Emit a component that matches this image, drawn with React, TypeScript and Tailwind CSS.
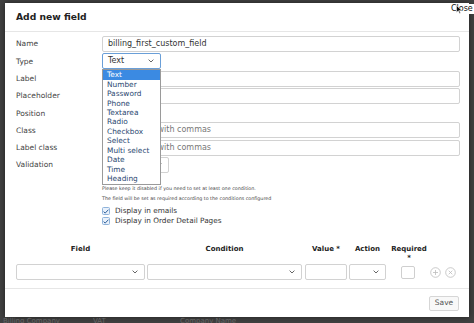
import React from 'react';

const types = [
  'Text',
  'Number',
  'Password',
  'Phone',
  'Textarea',
  'Radio',
  'Checkbox',
  'Select',
  'Multi select',
  'Date',
  'Time',
  'Heading'
];

function Chevron() {
  return (
    <svg width="6" height="4" viewBox="0 0 6 4" className="shrink-0">
      <polyline points="0.6,0.6 3,3 5.4,0.6" fill="none" stroke="#555" strokeWidth="0.9" />
    </svg>
  );
}

function Field({ children, className = '' }: { children?: React.ReactNode; className?: string }) {
  return (
    <div
      className={`h-[16px] border border-[#d2d2d2] rounded-[2px] px-[5px] flex items-center text-[8px] text-[#333] bg-white ${className}`}
    >
      {children}
    </div>
  );
}

function SelectBox({ className = '', text = '', focused = false }: { className?: string; text?: string; focused?: boolean }) {
  return (
    <div
      className={`h-[16px] border rounded-[2px] pl-[5px] pr-[6px] flex items-center justify-between text-[8px] text-[#333] bg-white ${
        focused ? 'border-[#6a9fd8]' : 'border-[#d2d2d2]'
      } ${className}`}
    >
      <span>{text}</span>
      <Chevron />
    </div>
  );
}

function Row({ label, children }: { label: string; children?: React.ReactNode }) {
  return (
    <div className="flex items-center mb-[1.3px]">
      <div className="w-[86px] shrink-0 text-[7.5px] text-[#444]">{label}</div>
      <div className="flex-1 h-[16px] relative">{children}</div>
    </div>
  );
}

function Check({ label }: { label: string }) {
  return (
    <div className="flex items-center h-[10px] gap-[5px]">
      <div className="w-[8px] h-[8px] rounded-[1.5px] border border-[#8fb3da] bg-[#e9f1fb] flex items-center justify-center">
        <svg width="6" height="5" viewBox="0 0 6 5">
          <polyline points="0.6,2.6 2.2,4.1 5.4,0.7" fill="none" stroke="#2d5f9a" strokeWidth="1" />
        </svg>
      </div>
      <span className="text-[7.3px] text-[#333]">{label}</span>
    </div>
  );
}

function CircleIcon({ kind }: { kind: 'plus' | 'x' }) {
  return (
    <svg width="11" height="11" viewBox="0 0 11 11">
      <circle cx="5.5" cy="5.5" r="4.8" fill="none" stroke="#bdbdbd" strokeWidth="0.8" />
      {kind === 'plus' ? (
        <path d="M5.5 3v5M3 5.5h5" stroke="#bdbdbd" strokeWidth="0.8" />
      ) : (
        <path d="M3.7 3.7l3.6 3.6M7.3 3.7l-3.6 3.6" stroke="#bdbdbd" strokeWidth="0.8" />
      )}
    </svg>
  );
}

export default function App() {
  return (
    <div className="w-[474px] h-[323px] bg-[#414141] relative overflow-hidden pt-[3px] pl-[5px] font-['DejaVu_Sans',sans-serif]">
      <div className="w-[464px] h-[314px] bg-white flex flex-col shadow-[0_0_6px_rgba(0,0,0,0.5)]">
        {/* Header */}
        <div className="h-[29px] shrink-0 border-b border-[#e6e6e6] px-[11px] flex items-center">
          <h1 className="text-[9.2px] font-bold text-[#222]">Add new field</h1>
        </div>

        {/* Body */}
        <div className="flex-1 pl-[11px] pr-[9px] pt-[4px]">
          <Row label="Name">
            <Field>billing_first_custom_field</Field>
          </Row>
          <Row label="Type">
            <SelectBox className="w-[59px]" text="Text" focused />
            <div className="absolute left-0 top-[16px] w-[59px] z-10 bg-white border border-[#9a9a9a]">
              {types.map((t, i) => (
                <div
                  key={t}
                  className={`h-[9.45px] leading-[9.45px] pl-[4px] text-[7.4px] ${
                    i === 0 ? 'bg-[#3b8ae2] text-white' : 'text-[#2a4870]'
                  }`}
                >
                  {t}
                </div>
              ))}
            </div>
          </Row>
          <Row label="Label">
            <Field />
          </Row>
          <Row label="Placeholder">
            <Field />
          </Row>
          <Row label="Position">
            <Field className="w-[59px]" />
          </Row>
          <Row label="Class">
            <Field>
              <span className="text-[#777]">Add classes with commas</span>
            </Field>
          </Row>
          <Row label="Label class">
            <Field>
              <span className="text-[#777]">Add classes with commas</span>
            </Field>
          </Row>
          <Row label="Validation">
            <SelectBox className="w-[67px]" />
          </Row>

          <div className="ml-[86px] mt-[11px] text-[4.8px] text-[#444] leading-[10px]">
            <div>Please keep it disabled if you need to set at least one condition.</div>
            <div>The field will be set as required according to the conditions configured</div>
          </div>

          <div className="ml-[86px] mt-[2px]">
            <Check label="Display in emails" />
            <Check label="Display in Order Detail Pages" />
          </div>

          {/* Conditions table */}
          <div className="mt-[19px] flex text-[7px] font-bold text-[#222] leading-[9px]">
            <div className="w-[129px] text-center">Field</div>
            <div className="w-[155px] ml-[2px] text-center">Condition</div>
            <div className="w-[42px] ml-[3px] text-center">Value *</div>
            <div className="w-[37px] ml-[2px] text-center">Action</div>
            <div className="w-[42px] ml-[2px] text-center">
              <div>Required</div>
              <div>*</div>
            </div>
          </div>
          <div className="mt-[1px] flex items-center">
            <SelectBox className="w-[129px]" />
            <SelectBox className="w-[155px] ml-[2px]" />
            <Field className="w-[42px] ml-[3px]" />
            <SelectBox className="w-[37px] ml-[2px]" />
            <div className="w-[42px] ml-[2px] flex justify-center">
              <div className="w-[14px] h-[13px] border border-[#cfcfcf] rounded-[2px] -ml-[2px]" />
            </div>
            <div className="flex items-center gap-[4px]">
              <CircleIcon kind="plus" />
              <CircleIcon kind="x" />
            </div>
          </div>
        </div>

        {/* Footer */}
        <div className="h-[29px] shrink-0 border-t border-[#e6e6e6] flex items-center justify-end pr-[10px]">
          <button className="h-[15px] w-[30px] border border-[#d6d6d6] rounded-[2px] bg-[#f8f8f8] text-[7.5px] text-[#555] flex items-center justify-center">
            Save
          </button>
        </div>
      </div>

      {/* page behind the modal */}
      <div className="flex text-[7px] text-[#666] leading-[8px] -ml-[2px]">
        <span className="w-[90px]">Billing Company</span>
        <span className="w-[87px]">VAT</span>
        <span>Company Name</span>
      </div>

      {/* close button of the modal */}
      <div className="absolute top-[4px] right-0 w-[24px] bg-white pl-[1px] text-[8px] text-[#111] leading-[10px] overflow-hidden whitespace-nowrap">
        Close
      </div>
      <svg className="absolute top-[5px] left-[456px]" width="6" height="9" viewBox="0 0 6 9">
        <path d="M0.5 0.5v7l1.8-1.7 1.2 2.7 1-.4-1.2-2.6h2.4z" fill="#111" stroke="#fff" strokeWidth="0.5" />
      </svg>
    </div>
  );
}
